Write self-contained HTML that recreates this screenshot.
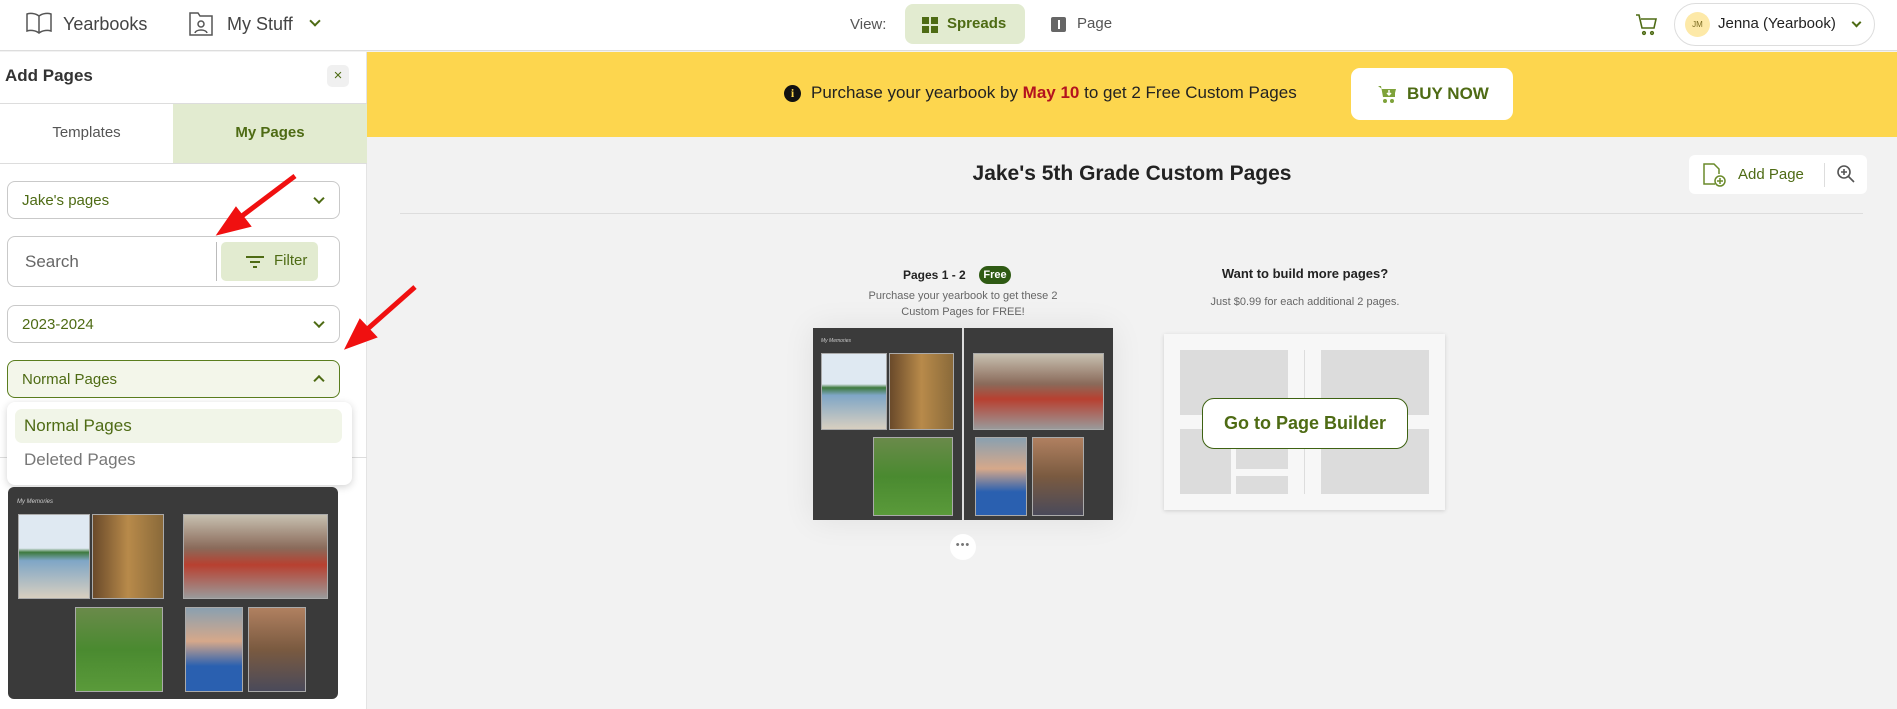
<!DOCTYPE html>
<html><head><meta charset="utf-8"><style>
*{box-sizing:border-box;margin:0;padding:0}
body{width:1897px;height:709px;overflow:hidden;background:#f2f2f2;font-family:"Liberation Sans",sans-serif;position:relative;color:#222}
.a{position:absolute}
.dd{position:absolute;left:7px;width:333px;border:1px solid #c9c9c9;border-radius:8px;background:#fff;font-size:15px;color:#4e6b14;padding-left:14px;display:flex;align-items:center}
.chev{position:absolute;right:16px;top:50%;width:8px;height:8px;border-right:2px solid #4e6b14;border-bottom:2px solid #4e6b14;transform:translateY(-70%) rotate(45deg)}
.ph{position:absolute;border:1px solid #aaa}
</style></head><body>
<div class="a" style="left:0;top:0;width:1897px;height:51px;background:#fff;border-bottom:1px solid #ddd"></div>
<svg class="a" style="left:25px;top:11px" width="28" height="24" viewBox="0 0 28 24" fill="none" stroke="#555" stroke-width="1.5"><path d="M14 5C10 2 5 2 2 3v17c3-1 8-1 12 2 4-3 9-3 12-2V3c-3-1-8-1-12 2zM14 5v17"/></svg>
<div class="a" style="left:63px;top:14px;font-size:18px;color:#444">Yearbooks</div>
<svg class="a" style="left:188px;top:9px" width="26" height="28" viewBox="0 0 26 28" fill="none" stroke="#555" stroke-width="1.5"><path d="M2 4h8l2 3h12v19H2z"/><circle cx="13" cy="15" r="3"/><path d="M7 24c1-4 11-4 12 0"/></svg>
<div class="a" style="left:227px;top:14px;font-size:18px;color:#444">My Stuff</div>
<div class="a" style="left:311px;top:17px;width:8px;height:8px;border-right:2px solid #4e6b14;border-bottom:2px solid #4e6b14;transform:rotate(45deg)"></div>
<div class="a" style="left:850px;top:16px;font-size:15px;color:#555">View:</div>
<div class="a" style="left:905px;top:4px;width:120px;height:40px;background:#e2ebd0;border-radius:8px"></div>
<svg class="a" style="left:922px;top:17px" width="16" height="16"><rect x="0" y="0" width="7" height="7" fill="#4e6b14"/><rect x="9" y="0" width="7" height="7" fill="#4e6b14"/><rect x="0" y="9" width="7" height="7" fill="#4e6b14"/><rect x="9" y="9" width="7" height="7" fill="#4e6b14"/></svg>
<div class="a" style="left:947px;top:15px;font-size:15px;font-weight:bold;color:#4e6b14">Spreads</div>
<div class="a" style="left:1051px;top:17px;width:15px;height:15px;background:#666;border-radius:2px"><div style="margin:3px auto;width:2px;height:9px;background:#fff"></div></div>
<div class="a" style="left:1077px;top:15px;font-size:15px;color:#555">Page</div>
<svg class="a" style="left:1634px;top:12px" width="24" height="24" viewBox="0 0 24 24" fill="none" stroke="#4e6b14" stroke-width="1.6"><path d="M2 3h3l3 13h12l2-9H7"/><circle cx="10" cy="21" r="1.3"/><circle cx="18" cy="21" r="1.3"/></svg>
<div class="a" style="left:1674px;top:3px;width:201px;height:43px;border:1px solid #ddd;border-radius:22px;background:#fff"></div>
<div class="a" style="left:1685px;top:12px;width:25px;height:25px;border-radius:50%;background:#fde9a8;font-size:8px;color:#7a6a20;text-align:center;line-height:25px">JM</div>
<div class="a" style="left:1718px;top:15px;font-size:15px;color:#222">Jenna (Yearbook)</div>
<div class="a" style="left:1853px;top:19px;width:7px;height:7px;border-right:2px solid #4e6b14;border-bottom:2px solid #4e6b14;transform:rotate(45deg)"></div>

<div class="a" style="left:0;top:52px;width:367px;height:657px;background:#fff;border-right:1px solid #e4e4e4"></div>
<div class="a" style="left:5px;top:66px;font-size:17px;font-weight:bold;color:#333">Add Pages</div>
<div class="a" style="left:327px;top:65px;width:22px;height:22px;background:#f0f0f0;border-radius:5px;text-align:center;line-height:21px;font-size:15px;color:#4e6b14">×</div>
<div class="a" style="left:0;top:103px;width:367px;height:1px;background:#ddd"></div>
<div class="a" style="left:173px;top:104px;width:194px;height:59px;background:#e2ebd0"></div>
<div class="a" style="left:0;top:163px;width:367px;height:1px;background:#ddd"></div>
<div class="a" style="left:0;top:124px;width:173px;text-align:center;font-size:15px;color:#555">Templates</div>
<div class="a" style="left:173px;top:124px;width:194px;text-align:center;font-size:15px;font-weight:bold;color:#4e6b14">My Pages</div>
<div class="dd" style="top:181px;height:38px">Jake's pages<span class="chev"></span></div>
<div class="dd" style="top:236px;height:51px;color:#666;font-size:17px;padding-left:17px">Search</div>
<div class="a" style="left:216px;top:242px;width:1px;height:39px;background:#bbb"></div>
<div class="a" style="left:221px;top:242px;width:97px;height:39px;background:#e2ebd0;border-radius:5px"></div>
<svg class="a" style="left:246px;top:255px" width="18" height="14"><path d="M0 2h18M4 7h10M7 12h4" stroke="#4e6b14" stroke-width="2"/></svg>
<div class="a" style="left:274px;top:252px;font-size:15px;color:#4e6b14">Filter</div>
<div class="dd" style="top:305px;height:38px">2023-2024<span class="chev"></span></div>
<div class="dd" style="top:360px;height:38px;background:#f3f6ea;border-color:#5a7d1e">Normal Pages<span class="chev" style="transform:translateY(-30%) rotate(225deg)"></span></div>
<div class="a" style="left:0;top:457px;width:367px;height:1px;background:#ddd"></div>
<div class="a" style="left:7px;top:402px;width:345px;height:83px;background:#fff;border-radius:8px;box-shadow:0 2px 8px rgba(0,0,0,.18)"></div>
<div class="a" style="left:15px;top:409px;width:327px;height:34px;background:#f1f5e8;border-radius:7px"></div>
<div class="a" style="left:24px;top:416px;font-size:17px;color:#4e6b14">Normal Pages</div>
<div class="a" style="left:24px;top:450px;font-size:17px;color:#777">Deleted Pages</div>
<div class="a" style="left:8px;top:487px;width:330px;height:212px;background:#3a3a3a;border-radius:6px"></div>
<div class="a" style="left:17px;top:499px;font-size:6px;color:#ccc;font-style:italic">My Memories</div>
<div class="ph" style="left:18px;top:514px;width:72px;height:85px;background:linear-gradient(#dfe9f2 40%,#3e7a3e 45%,#7fa6c6 55%,#d8cfc0)"></div>
<div class="ph" style="left:92px;top:514px;width:72px;height:85px;background:linear-gradient(90deg,#6a4a2a,#b88a4a,#8a6a3a)"></div>
<div class="ph" style="left:183px;top:514px;width:145px;height:85px;background:linear-gradient(#c7c0b0,#8a6a5a 40%,#b84030 60%,#9a9a9a)"></div>
<div class="ph" style="left:75px;top:607px;width:88px;height:85px;background:linear-gradient(#6a8a4a,#4a8a30 50%,#5a9a3a)"></div>
<div class="ph" style="left:185px;top:607px;width:58px;height:85px;background:linear-gradient(#8aa0b0,#d6a88a 40%,#2a60b0 70%)"></div>
<div class="ph" style="left:248px;top:607px;width:58px;height:85px;background:linear-gradient(#b08060,#7a5a40 50%,#4a4a5a)"></div>

<div class="a" style="left:367px;top:52px;width:1530px;height:85px;background:#fdd64e"></div>
<div class="a" style="left:784px;top:85px;width:17px;height:17px;border-radius:50%;background:#111;color:#fdd64e;font-size:12px;font-weight:bold;text-align:center;line-height:17px;font-family:'Liberation Serif',serif">i</div>
<div class="a" style="left:811px;top:83px;font-size:17px;color:#222">Purchase your yearbook by <b style="color:#b3121f">May 10</b> to get 2 Free Custom Pages</div>
<div class="a" style="left:1351px;top:68px;width:162px;height:52px;background:#fff;border-radius:9px"></div>
<svg class="a" style="left:1377px;top:84px" width="20" height="20" viewBox="0 0 20 20"><path d="M1 2h3l2 11h11l2-8H5" fill="#7ea23a"/><rect x="6" y="5" width="12" height="8" fill="#7ea23a"/><circle cx="8" cy="17" r="2" fill="#7ea23a"/><circle cx="15" cy="17" r="2" fill="#7ea23a"/><path d="M12 6v5M10 9l2 2 2-2" stroke="#fff" stroke-width="1.5" fill="none"/></svg>
<div class="a" style="left:1407px;top:84px;font-size:17px;font-weight:bold;color:#4e6b14">BUY NOW</div>

<div class="a" style="left:367px;top:162px;width:1530px;text-align:center;font-size:21px;font-weight:bold;color:#222">Jake's 5th Grade Custom Pages</div>
<div class="a" style="left:1689px;top:155px;width:178px;height:39px;background:#fff;border-radius:6px"></div>
<svg class="a" style="left:1702px;top:162px" width="26" height="26" viewBox="0 0 26 26" fill="none" stroke="#6a8a2a" stroke-width="1.5"><path d="M13 22H2V2h10l5 5v5"/><circle cx="18" cy="19" r="5"/><path d="M18 16v6M15 19h6"/></svg>
<div class="a" style="left:1738px;top:166px;font-size:15px;color:#4e6b14">Add Page</div>
<div class="a" style="left:1824px;top:163px;width:1px;height:24px;background:#ddd"></div>
<svg class="a" style="left:1836px;top:164px" width="20" height="20" viewBox="0 0 20 20" fill="none" stroke="#555" stroke-width="1.6"><circle cx="8" cy="8" r="6"/><path d="M12.5 12.5L18 18M8 5v6M5 8h6"/></svg>
<div class="a" style="left:400px;top:213px;width:1463px;height:1px;background:#ddd"></div>

<div class="a" style="left:903px;top:268px;font-size:12px;font-weight:bold;color:#222">Pages 1 - 2</div>
<div class="a" style="left:979px;top:266px;width:32px;height:18px;border-radius:9px;background:#2f5a14;color:#fff;font-size:11px;font-weight:bold;text-align:center;line-height:18px">Free</div>
<div class="a" style="left:813px;top:288px;width:300px;text-align:center;font-size:11px;line-height:16px;color:#666">Purchase your yearbook to get these 2<br>Custom Pages for FREE!</div>
<div class="a" style="left:813px;top:328px;width:300px;height:192px;background:#3b3b3b;box-shadow:0 0 30px rgba(0,0,0,.08)"></div>
<div class="a" style="left:962px;top:328px;width:2px;height:192px;background:#ddd"></div>
<div class="a" style="left:821px;top:338px;font-size:5px;color:#ccc;font-style:italic">My Memories</div>
<div class="ph" style="left:821px;top:353px;width:66px;height:77px;background:linear-gradient(#dfe9f2 40%,#3e7a3e 45%,#7fa6c6 55%,#d8cfc0)"></div>
<div class="ph" style="left:889px;top:353px;width:65px;height:77px;background:linear-gradient(90deg,#6a4a2a,#b88a4a,#8a6a3a)"></div>
<div class="ph" style="left:873px;top:437px;width:80px;height:79px;background:linear-gradient(#6a8a4a,#4a8a30 50%,#5a9a3a)"></div>
<div class="ph" style="left:973px;top:353px;width:131px;height:77px;background:linear-gradient(#c7c0b0,#8a6a5a 40%,#b84030 60%,#9a9a9a)"></div>
<div class="ph" style="left:975px;top:437px;width:52px;height:79px;background:linear-gradient(#8aa0b0,#d6a88a 40%,#2a60b0 70%)"></div>
<div class="ph" style="left:1032px;top:437px;width:52px;height:79px;background:linear-gradient(#b08060,#7a5a40 50%,#4a4a5a)"></div>
<div class="a" style="left:950px;top:534px;width:26px;height:26px;border-radius:50%;background:#fff;text-align:center;font-size:11px;line-height:22px;color:#777;letter-spacing:1px">•••</div>

<div class="a" style="left:1164px;top:266px;width:282px;text-align:center;font-size:13px;font-weight:bold;color:#222">Want to build more pages?</div>
<div class="a" style="left:1164px;top:296px;width:282px;text-align:center;font-size:11px;color:#666">Just $0.99 for each additional 2 pages.</div>
<div class="a" style="left:1164px;top:334px;width:281px;height:176px;background:#f7f7f7;box-shadow:0 1px 4px rgba(0,0,0,.15)"></div>
<div class="a" style="left:1180px;top:350px;width:108px;height:65px;background:#dcdcdc"></div>
<div class="a" style="left:1321px;top:350px;width:108px;height:65px;background:#dcdcdc"></div>
<div class="a" style="left:1180px;top:429px;width:51px;height:65px;background:#dcdcdc"></div>
<div class="a" style="left:1236px;top:429px;width:52px;height:40px;background:#dcdcdc"></div>
<div class="a" style="left:1236px;top:476px;width:52px;height:18px;background:#dcdcdc"></div>
<div class="a" style="left:1321px;top:429px;width:108px;height:65px;background:#dcdcdc"></div>
<div class="a" style="left:1304px;top:350px;width:1px;height:144px;background:#ddd"></div>
<div class="a" style="left:1202px;top:398px;width:206px;height:51px;background:#fff;border:1px solid #3e6212;border-radius:12px;text-align:center;line-height:49px;font-size:18px;font-weight:bold;color:#4e6b14">Go to Page Builder</div>

<svg class="a" style="left:0;top:0" width="1897" height="709">
<g fill="#f01010" stroke="#f01010">
<line x1="295" y1="176" x2="238" y2="219" stroke-width="5"/>
<polygon points="218,234 236,208 250,226" stroke-width="2"/>
<line x1="415" y1="287" x2="363" y2="333" stroke-width="5"/>
<polygon points="346,348 360,320 376,337" stroke-width="2"/>
</g></svg>
</body></html>
